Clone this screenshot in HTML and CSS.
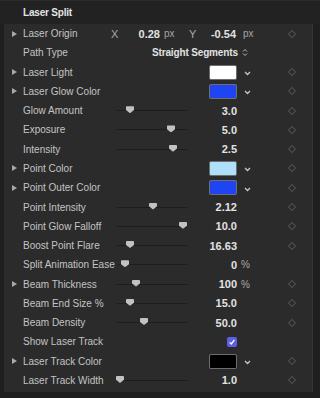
FILE: index.html
```html
<!DOCTYPE html>
<html>
<head>
<meta charset="utf-8">
<link rel="stylesheet" href="styles.css">
</head>
<body>
<div class="header">Laser Split</div>
<div class="panel">
  <div class="row">
    <span class="tri"></span><span class="label">Laser Origin</span>
    <div class="origin">
      <span class="ax">X</span><span class="oval">0.28</span><span class="ounit">px</span>
      <span class="ax ay">Y</span><span class="oval oval2">-0.54</span><span class="ounit ounit2">px</span>
    </div>
    <span class="kf"></span>
  </div>
  <div class="row">
    <span></span><span class="label">Path Type</span>
    <div class="popup">Straight Segments <svg class="updown" width="6" height="9" viewBox="0 0 6 9"><polyline points="1,3.5 3,1.5 5,3.5" /><polyline points="1,5.5 3,7.5 5,5.5" /></svg></div>
  </div>
  <div class="row">
    <span class="tri"></span><span class="label">Laser Light</span><span></span>
    <span class="val"><span class="swatch"><span class="fill white"></span></span></span>
    <span class="unit"><svg class="chev" width="7" height="5" viewBox="0 0 7 5"><polyline points="1,1 3.5,3.5 6,1" /></svg></span>
    <span class="kf"></span>
  </div>
  <div class="row">
    <span class="tri"></span><span class="label">Laser Glow Color</span><span></span>
    <span class="val"><span class="swatch"><span class="fill blue"></span></span></span>
    <span class="unit"><svg class="chev" width="7" height="5" viewBox="0 0 7 5"><polyline points="1,1 3.5,3.5 6,1" /></svg></span>
    <span class="kf"></span>
  </div>
  <div class="row">
    <span></span><span class="label">Glow Amount</span>
    <span class="slider"><span class="track"><span class="knob" style="left:13px"></span></span></span>
    <span class="val">3.0</span><span class="unit"></span><span class="kf"></span>
  </div>
  <div class="row">
    <span></span><span class="label">Exposure</span>
    <span class="slider"><span class="track"><span class="knob" style="left:54px"></span></span></span>
    <span class="val">5.0</span><span class="unit"></span><span class="kf"></span>
  </div>
  <div class="row">
    <span></span><span class="label">Intensity</span>
    <span class="slider"><span class="track"><span class="knob" style="left:56px"></span></span></span>
    <span class="val">2.5</span><span class="unit"></span><span class="kf"></span>
  </div>
  <div class="row">
    <span class="tri"></span><span class="label">Point Color</span><span></span>
    <span class="val"><span class="swatch"><span class="fill lightblue"></span></span></span>
    <span class="unit"><svg class="chev" width="7" height="5" viewBox="0 0 7 5"><polyline points="1,1 3.5,3.5 6,1" /></svg></span>
    <span class="kf"></span>
  </div>
  <div class="row">
    <span class="tri"></span><span class="label">Point Outer Color</span><span></span>
    <span class="val"><span class="swatch"><span class="fill blue"></span></span></span>
    <span class="unit"><svg class="chev" width="7" height="5" viewBox="0 0 7 5"><polyline points="1,1 3.5,3.5 6,1" /></svg></span>
    <span class="kf"></span>
  </div>
  <div class="row">
    <span></span><span class="label">Point Intensity</span>
    <span class="slider"><span class="track"><span class="knob" style="left:36px"></span></span></span>
    <span class="val">2.12</span><span class="unit"></span><span class="kf"></span>
  </div>
  <div class="row">
    <span></span><span class="label">Point Glow Falloff</span>
    <span class="slider"><span class="track"><span class="knob" style="left:66px"></span></span></span>
    <span class="val">10.0</span><span class="unit"></span><span class="kf"></span>
  </div>
  <div class="row">
    <span></span><span class="label">Boost Point Flare</span>
    <span class="slider"><span class="track"><span class="knob" style="left:13px"></span></span></span>
    <span class="val">16.63</span><span class="unit"></span><span class="kf"></span>
  </div>
  <div class="row">
    <span></span><span class="label">Split Animation Ease</span>
    <span class="slider"><span class="track"><span class="knob" style="left:8px"></span></span></span>
    <span class="val">0</span><span class="unit">%</span>
  </div>
  <div class="row">
    <span class="tri"></span><span class="label">Beam Thickness</span>
    <span class="slider"><span class="track"><span class="knob" style="left:19px"></span></span></span>
    <span class="val">100</span><span class="unit">%</span><span class="kf"></span>
  </div>
  <div class="row">
    <span></span><span class="label">Beam End Size %</span>
    <span class="slider"><span class="track"><span class="knob" style="left:13px"></span></span></span>
    <span class="val">15.0</span><span class="unit"></span><span class="kf"></span>
  </div>
  <div class="row">
    <span></span><span class="label">Beam Density</span>
    <span class="slider"><span class="track"><span class="knob" style="left:27px"></span></span></span>
    <span class="val">50.0</span><span class="unit"></span><span class="kf"></span>
  </div>
  <div class="row">
    <span></span><span class="label">Show Laser Track</span><span></span>
    <span class="val"><span class="check"><svg width="10" height="10" viewBox="0 0 10 10"><polyline points="2.6,5.4 4.3,7 7.4,2.8" /></svg></span></span>
  </div>
  <div class="row">
    <span class="tri"></span><span class="label">Laser Track Color</span><span></span>
    <span class="val"><span class="swatch"><span class="fill black"></span></span></span>
    <span class="unit"><svg class="chev" width="7" height="5" viewBox="0 0 7 5"><polyline points="1,1 3.5,3.5 6,1" /></svg></span>
    <span class="kf"></span>
  </div>
  <div class="row">
    <span></span><span class="label">Laser Track Width</span>
    <span class="slider"><span class="track"><span class="knob" style="left:3px"></span></span></span>
    <span class="val">1.0</span><span class="unit"></span><span class="kf"></span>
  </div>
</div>
</body>
</html>
```
FILE: styles.css
```css
* { box-sizing: border-box; }
html, body {
  margin: 0;
  padding: 0;
  width: 320px;
  height: 398px;
  overflow: hidden;
  background: #1f1f1f;
  font-family: "Liberation Sans", Arial, sans-serif;
}
.header {
  height: 24px;
  padding-left: 23px;
  display: flex;
  align-items: center;
  font-size: 10px;
  font-weight: bold;
  letter-spacing: -0.2px;
  color: #e4e4e4;
  background: #222222;
  border-top: 1px solid #2a2a2a;
}
.panel {
  margin-left: 4px;
  width: 309px;
  background: #2b2b2b;
  padding-bottom: 1.5px;
  border-right: 1px solid #363636;
}
.row {
  height: 19.28px;
  display: grid;
  grid-template-columns: 19px 86px 84px 44px 45px 20px 11px;
  align-items: center;
}
.tri {
  width: 0;
  height: 0;
  margin-left: 8px;
  border-left: 5px solid #a9a9a9;
  border-top: 3px solid transparent;
  border-bottom: 3px solid transparent;
}
.label {
  font-size: 10px;
  color: #c4c4c4;
  white-space: nowrap;
}
.val {
  display: flex;
  justify-content: flex-end;
  align-items: center;
  font-size: 11px;
  font-weight: bold;
  color: #e2e2e2;
  white-space: nowrap;
}
.unit {
  display: flex;
  align-items: center;
  padding-left: 4px;
  font-size: 10px;
  color: #a8a8a8;
}
.kf {
  justify-self: center;
  width: 6px;
  height: 6px;
  border: 1px solid #505050;
  transform: rotate(45deg);
}
.origin {
  grid-column: 3 / 6;
  display: flex;
  align-items: center;
  white-space: nowrap;
}
.ax {
  width: 20px;
  padding-left: 2px;
  font-size: 11px;
  color: #a8a8a8;
}
.ay { width: 14px; padding-left: 0; }
.oval {
  width: 31px;
  text-align: right;
  font-size: 11px;
  font-weight: bold;
  color: #e2e2e2;
}
.oval2 { width: 33px; }
.ounit {
  width: 29px;
  padding-left: 4px;
  font-size: 10px;
  color: #a8a8a8;
}
.ounit2 { width: 46px; padding-left: 7px; }
.origin + .kf { grid-column: 6; }
.popup {
  grid-column: 3 / 6;
  padding-left: 43px;
  display: flex;
  align-items: center;
  font-size: 10px;
  font-weight: bold;
  letter-spacing: -0.15px;
  color: #e2e2e2;
  white-space: nowrap;
}
.updown {
  margin-left: 4px;
  fill: none;
  stroke: #bdbdbd;
  stroke-width: 1;
}
.chev {
  margin-left: 3px;
  margin-top: 3px;
  fill: none;
  stroke: #c8c8c8;
  stroke-width: 1.3;
}
.swatch {
  display: flex;
  width: 28px;
  height: 15px;
  padding: 1px;
  border-radius: 2px;
  background: #6e6e6e;
}
.fill {
  flex: 1;
  border-radius: 1px;
}
.white { background: #ffffff; }
.blue { background: #1f45f2; }
.lightblue { background: #aee0fa; }
.black { background: #000000; }
.slider {
  padding-left: 8px;
  display: flex;
  align-items: center;
}
.track {
  position: relative;
  width: 70px;
  height: 1px;
  background: #1d1d1d;
}
.knob {
  position: absolute;
  top: -4px;
  width: 8px;
  height: 7px;
  margin-left: -4px;
  background: #c2c2c2;
  clip-path: polygon(0 0, 100% 0, 100% 55%, 50% 100%, 0 55%);
  border-radius: 1px;
}
.check {
  display: flex;
  width: 10px;
  height: 10px;
  border-radius: 2px;
  background: #5e5ee6;
  margin-right: 0.5px;
}
.check svg {
  fill: none;
  stroke: #ffffff;
  stroke-width: 1.3;
}
```
